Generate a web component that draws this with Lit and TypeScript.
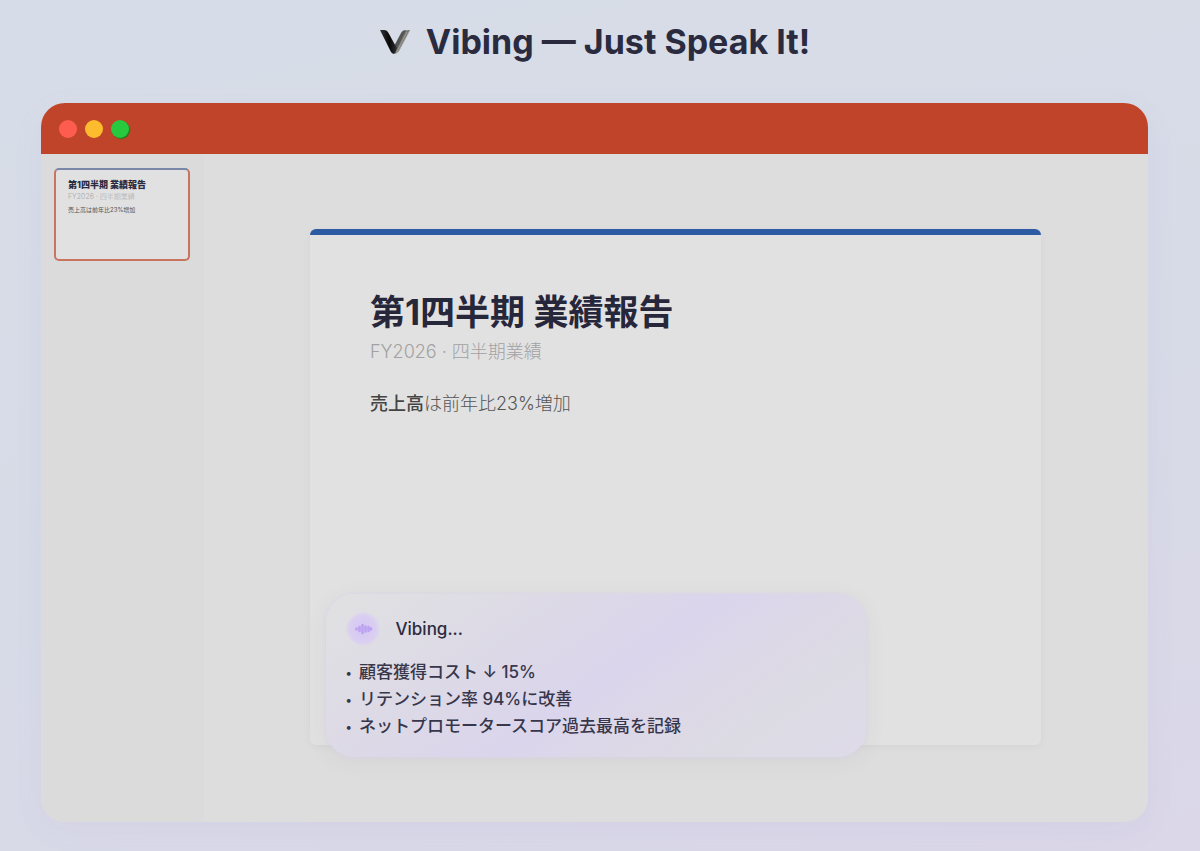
import { LitElement, html, css } from "lit";
import { customElement } from "lit/decorators.js";

const slide = {
  title: "第1四半期 業績報告",
  subtitle: "FY2026 · 四半期業績",
  lead: "売上高",
  rest: "は前年比23%増加",
};

const notes = [
  "顧客獲得コスト ↓ 15%",
  "リテンション率 94%に改善",
  "ネットプロモータースコア過去最高を記録",
];

@customElement("app-root")
export class AppRoot extends LitElement {
  static styles = css`
    :host {
      display: flex;
      flex-direction: column;
      box-sizing: border-box;
      min-height: 100vh;
      padding: 18px 52px 29px 41px;
      font-family: Inter, "Noto Sans CJK JP", sans-serif;
      color: #2b2b40;
      background: linear-gradient(165deg, #d7dde8 0%, #d7dbe7 55%, #dbd7e8 100%);
    }
    * {
      box-sizing: border-box;
    }
    .brand {
      display: flex;
      align-items: center;
      justify-content: center;
      gap: 15px;
      height: 48px;
      margin: 0 0 37px;
      font-size: 34px;
      line-height: 48px;
      font-weight: 700;
    }
    .logo {
      width: 32px;
      height: 26px;
    }
    .window {
      position: relative;
      display: flex;
      flex-direction: column;
      flex: 1;
      border-radius: 24px;
      background: #dddddd;
      box-shadow: 0 8px 32px rgba(120, 100, 210, 0.06);
    }
    .titlebar {
      display: flex;
      align-items: center;
      gap: 8px;
      height: 51px;
      padding: 0 18px;
      border-radius: 24px 24px 0 0;
      background: #c04429;
    }
    .dot {
      width: 18px;
      height: 18px;
      padding: 0;
      border: 0;
      border-radius: 50%;
    }
    .close { background: #ff5c50; }
    .minimise { background: #fdbc2e; }
    .zoom { background: #27c93f; box-shadow: 1px 1px 1px #16821c; }
    .body {
      display: flex;
      flex: 1;
    }
    .sidebar {
      width: 163px;
      padding: 14px;
      padding-left: 13px;
      border-radius: 0 0 0 24px;
      background: #dbdbdb;
    }
    .thumb {
      display: flex;
      flex-direction: column;
      justify-content: flex-start;
      width: 100%;
      height: 93px;
      padding: 9px 12px;
      border: 2px solid #c9745f;
      border-top-color: #7b87a8;
      border-radius: 5px;
      background: #e1e1e1;
      color: inherit;
      font-family: inherit;
      text-align: left;
      white-space: nowrap;
    }
    .t-title {
      font-size: 9px;
      line-height: 12px;
      font-weight: 800;
    }
    .t-sub {
      font-size: 7px;
      line-height: 12px;
      font-weight: 300;
      color: #a8a8a8;
    }
    .t-text {
      font-size: 6px;
      line-height: 14px;
      color: #555555;
    }
    .stage {
      display: flex;
      flex: 1;
      align-items: center;
      justify-content: center;
      padding: 0 107px 2px 106px;
    }
    .slide {
      width: 100%;
      aspect-ratio: 731 / 516;
      padding: 54px 60px;
      border-top: 6px solid #2d5ba3;
      border-radius: 6px;
      background: #e1e1e1;
      box-shadow: 0 2px 8px rgba(0, 0, 0, 0.04);
    }
    .slide h2 {
      margin: 0;
      font-size: 35px;
      line-height: 46px;
      font-weight: 700;
      color: #27273b;
    }
    .slide p {
      margin: 0;
      font-size: 18px;
      line-height: 30px;
      color: #555555;
      font-weight: 300;
    }
    .slide .subtitle {
      margin: 2px 0 22px;
      color: #a2a2a2;
    }
    .slide b {
      font-weight: 500;
      color: #444444;
    }
    .panel {
      position: absolute;
      bottom: 65px;
      left: 50%;
      width: 540px;
      margin-left: -269px;
      padding: 17px 20px;
      border-radius: 28px;
      background: linear-gradient(145deg, #e0e0e3 5%, #dddae6 28%, #dad5ec 52%, #ddd8e7 66%, #dcdbe4 80%, #dedbe8 100%);
      box-shadow: 0 4px 24px rgba(90, 80, 120, 0.05), 0 0 4px rgba(218, 212, 236, 0.9);
    }
    .status {
      display: flex;
      align-items: center;
      gap: 16px;
      font-size: 17px;
      line-height: 36px;
      font-weight: 500;
    }
    .orb {
      width: 34px;
      height: 34px;
    }
    ul {
      margin: 12px 0 0;
      padding: 0;
      list-style: none;
      font-size: 17px;
      line-height: 27px;
      font-weight: 500;
      color: #37364b;
    }
    li {
      display: flex;
      gap: 7px;
      white-space: nowrap;
    }
    .bullet {
      font-size: 12px;
    }
  `;

  render() {
    return html`
      <h1 class="brand">
        <svg class="logo" viewBox="0 0 32 26" aria-hidden="true">
          <defs>
            <linearGradient id="stroke" x1="0" y1="0" x2="1" y2="0">
              <stop offset="0" stop-color="#343434" />
              <stop offset="0.55" stop-color="#080808" />
              <stop offset="1" stop-color="#333333" />
            </linearGradient>
          </defs>
          <path d="M14 25 L25 3 Q26 1 30 1 L31 1 L20 22 Q18 25 14 25Z" fill="#777774" />
          <path d="M13 21 L22 4 Q23.500 1 27 1 L16 24Z" fill="#555553" />
          <path d="M17 24 L28 3 M19 23 L30 3" stroke="#aaa9a7" stroke-width="0.7" />
          <path d="M1 1 H5 Q8 1 9.500 4 L15 14 L18 19 L16 24 Q14 26 12 23 L1 1Z" fill="url(#stroke)" />
        </svg>
        <span>Vibing — Just Speak It!</span>
      </h1>
      <main class="window">
        <header class="titlebar">
          <button class="dot close" aria-label="Close"></button>
          <button class="dot minimise" aria-label="Minimise"></button>
          <button class="dot zoom" aria-label="Zoom"></button>
        </header>
        <div class="body">
          <nav class="sidebar">
            <button class="thumb">
              <span class="t-title">${slide.title}</span>
              <span class="t-sub">${slide.subtitle}</span>
              <span class="t-text">${slide.lead}${slide.rest}</span>
            </button>
          </nav>
          <section class="stage">
            <article class="slide">
              <h2>${slide.title}</h2>
              <p class="subtitle">${slide.subtitle}</p>
              <p><b>${slide.lead}</b>${slide.rest}</p>
            </article>
          </section>
        </div>
        <aside class="panel">
          <div class="status">
            <svg class="orb" viewBox="0 0 34 34" aria-hidden="true">
              <defs>
                <radialGradient id="glow">
                  <stop offset="0" stop-color="#d5c6f5" />
                  <stop offset="0.8" stop-color="#dacff1" />
                  <stop offset="1" stop-color="#ddd5ed" stop-opacity="0.4" />
                </radialGradient>
              </defs>
              <circle cx="17" cy="17" r="17" fill="url(#glow)" />
              <path d="M10.500 16.500v1M13.500 15v4M16.500 13v8M19.500 14.500v5M22.500 15v4M25 16.500v1" stroke="#bda3f1" stroke-width="2.600" stroke-linecap="round" />
            </svg>
            <span>Vibing...</span>
          </div>
          <ul>
            ${notes.map((note) => html`<li><span class="bullet">•</span><span>${note}</span></li>`)}
          </ul>
        </aside>
      </main>
    `;
  }
}
